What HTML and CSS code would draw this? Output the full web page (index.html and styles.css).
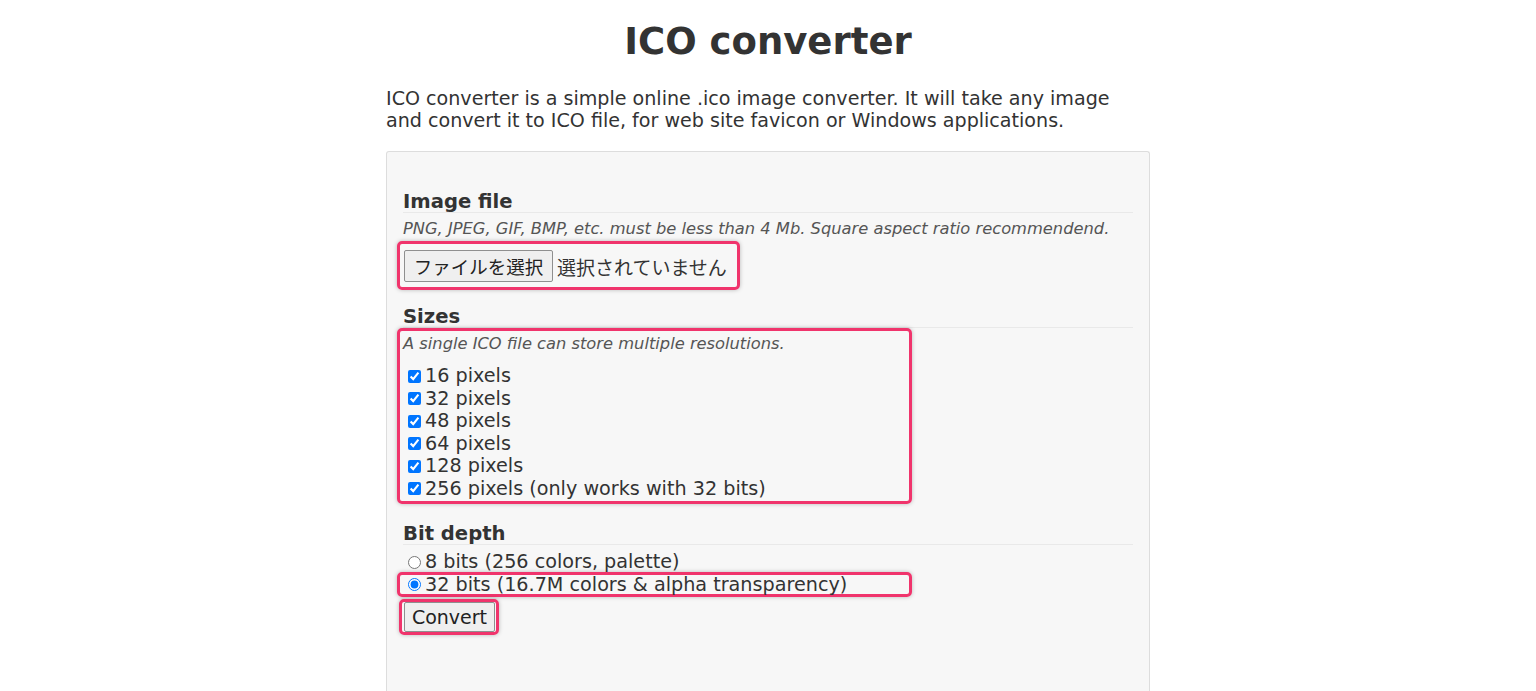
FILE: index.html
```html
<!DOCTYPE html>
<html lang="en">
<head>
<meta charset="utf-8">
<title>ICO converter</title>
<link rel="stylesheet" href="styles.css">
</head>
<body>
<h1 class="title">ICO converter</h1>
<main class="wrap">
  <p class="intro">ICO converter is a simple online .ico image converter. It will take any image<br>and convert it to ICO file, for web site favicon or Windows applications.</p>
  <form class="panel">
    <section class="field">
      <h3 class="field-title">Image file</h3>
      <p class="hint">PNG, JPEG, GIF, BMP, etc. must be less than 4 Mb. Square aspect ratio recommendend.</p>
      <div class="mark mark-file">
        <button type="button" class="btn btn-file">ファイルを選択</button>
        <span class="nofile">選択されていません</span>
      </div>
    </section>
    <section class="field">
      <h3 class="field-title">Sizes</h3>
      <div class="mark mark-sizes">
        <p class="hint">A single ICO file can store multiple resolutions.</p>
        <ul class="opts">
          <li><label class="opt"><input type="checkbox" checked>16 pixels</label></li>
          <li><label class="opt"><input type="checkbox" checked>32 pixels</label></li>
          <li><label class="opt"><input type="checkbox" checked>48 pixels</label></li>
          <li><label class="opt"><input type="checkbox" checked>64 pixels</label></li>
          <li><label class="opt"><input type="checkbox" checked>128 pixels</label></li>
          <li><label class="opt"><input type="checkbox" checked>256 pixels (only works with 32 bits)</label></li>
        </ul>
      </div>
    </section>
    <section class="field field-bits">
      <h3 class="field-title">Bit depth</h3>
      <label class="opt opt-radio"><input type="radio" name="bpp">8 bits (256 colors, palette)</label>
      <div class="mark mark-radio">
        <label class="opt opt-radio"><input type="radio" name="bpp" checked>32 bits (16.7M colors &amp; alpha transparency)</label>
      </div>
      <div class="mark mark-btn">
        <button type="button" class="btn btn-convert">Convert</button>
      </div>
    </section>
  </form>
</main>
</body>
</html>
```

FILE: styles.css
```css
html, body {
  margin: 0;
  padding: 0;
  background: #ffffff;
}
body {
  font-family: "DejaVu Sans", Verdana, "Noto Sans CJK JP", sans-serif;
  color: #333333;
}
.title {
  margin: 0;
  padding-top: 20px;
  font-size: 37px;
  line-height: 44px;
  font-weight: bold;
  text-align: center;
  color: #333333;
}
.wrap {
  width: 764px;
  margin: 0 auto;
}
.intro {
  margin: 0;
  padding-top: 24px;
  font-size: 19.1px;
  line-height: 22px;
  white-space: nowrap;
}
.panel {
  margin-top: 19px;
  background: #f7f7f7;
  border: 1px solid #dddddd;
  border-bottom: none;
  border-radius: 3px 3px 0 0;
  padding: 39px 16px 60px 16px;
}
.field {
  margin: 0;
}
.field-title {
  margin: 0;
  font-size: 19.6px;
  line-height: 21px;
  font-weight: bold;
  border-bottom: 1px solid #e9e9e9;
}
.hint {
  margin: 0;
  font-size: 16.3px;
  line-height: 19px;
  font-style: italic;
  color: #555555;
  white-space: nowrap;
}
.field > .hint {
  margin-top: 6px;
}
.mark {
  border: 3px solid #f0346c;
  border-radius: 5px;
  box-shadow: 0 0 4px rgba(0, 0, 0, 0.25);
  margin-left: -6px;
}
.mark-file {
  display: inline-flex;
  align-items: center;
  gap: 4px;
  margin-top: 3px;
  padding: 6px 10px 5px 4px;
}
.btn {
  font-family: "DejaVu Sans", Verdana, "Noto Sans CJK JP", sans-serif;
  color: #222222;
  background: #efefef;
  border: 1px solid #8f8f8f;
  border-radius: 2px;
  margin: 0;
}
.btn-file {
  font-family: "Noto Sans CJK JP", sans-serif;
  font-size: 18.5px;
  height: 32px;
  width: 149px;
  padding: 0;
}
.nofile {
  font-family: "Noto Sans CJK JP", sans-serif;
  font-size: 19px;
  color: #333333;
}
.field + .field {
  margin-top: 16px;
}
.field + .field-bits {
  margin-top: 19px;
}
.mark-sizes {
  width: 506px;
  padding: 3px 0 1px 3px;
}
.opts {
  list-style: none;
  margin: 12px 0 0 0;
  padding: 0;
}
.opt {
  display: flex;
  align-items: center;
  font-size: 19.2px;
  line-height: 22.5px;
  color: #333333;
  white-space: nowrap;
}
.opt input {
  margin: 0 4px 0 5px;
  width: 13px;
  height: 13px;
}
.field > .opt-radio {
  margin-top: 6px;
}
.mark-radio {
  width: 506px;
  margin-top: -2px;
  padding: 0 0 0 3px;
}
.mark-radio .opt {
  line-height: 19px;
}
.mark-btn {
  display: inline-block;
  margin-left: -4px;
  margin-top: 2px;
  padding: 0 1px 0 2px;
  line-height: 0;
}
.btn-convert {
  font-size: 19px;
  line-height: 28px;
  height: 30px;
  width: 91px;
  padding: 0;
}
```
